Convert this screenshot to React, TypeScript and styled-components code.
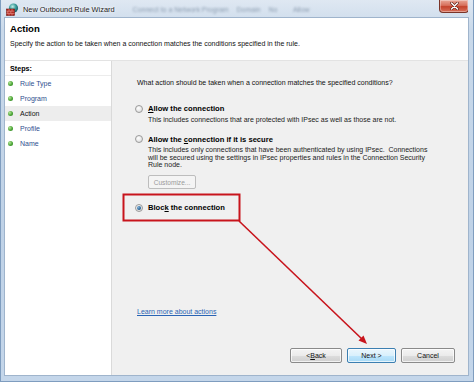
import React from 'react';
import styled, { createGlobalStyle } from 'styled-components';

const Global = createGlobalStyle`
  html, body { margin: 0; padding: 0; }
  body {
    width: 474px; height: 382px; overflow: hidden;
    font-family: "Liberation Sans", Arial, sans-serif;
    background: #bcd0e6;
  }
`;

const Window = styled.div`
  position: relative;
  width: 474px;
  height: 382px;
  box-sizing: border-box;
  display: flex;
  flex-direction: column;
  background: linear-gradient(180deg, #dfe8f2 0%, #c9d9ea 8%, #bfd2e7 60%, #c4d6ea 100%);
  border-left: 1px solid #7f9dbf;
  border-right: 1px solid #7f9dbf;
  border-bottom: 1px solid #7f9dbf;
  padding: 0 5px 6px 4px;
`;

const TitleBar = styled.div`
  position: relative;
  height: 18px;
  flex: 0 0 18px;
  display: flex;
  align-items: center;
  gap: 4px;
  padding-left: 1px;
  overflow: hidden;
`;

const TitleText = styled.span`
  font-family: "Liberation Sans", Arial, sans-serif;
  font-size: 7.4px;
  color: #1a1a1a;
  white-space: nowrap;
  text-shadow: 0 0 4px #fff, 0 0 2px #fff;
  position: relative;
  z-index: 1;
`;

const BlurText = styled.span`
  font-size: 7px;
  color: #50657d;
  opacity: 0.55;
  filter: blur(1.1px);
  white-space: nowrap;
  margin-left: 14px;
`;

const CloseButton = styled.div`
  position: absolute;
  right: -1px;
  top: 0;
  width: 30px;
  height: 13px;
  box-sizing: border-box;
  border: 1px solid #7a3428;
  border-top: none;
  border-radius: 0 0 4px 4px;
  background: linear-gradient(180deg, #e9a797 0%, #d7705c 45%, #c4432c 55%, #d8705a 100%);
  display: flex;
  align-items: center;
  justify-content: center;
  box-shadow: inset 0 0 0 1px rgba(255,255,255,0.35);
`;

const Client = styled.div`
  flex: 1;
  display: flex;
  flex-direction: column;
  background: #f0f0f0;
  box-shadow: 0 0 0 1px #9fb4cc;
`;

const Header = styled.div`
  height: 43px;
  flex: 0 0 43px;
  box-sizing: border-box;
  background: #ffffff;
  border-bottom: 1px solid #e3e3e3;
  padding: 5px 0 0 5px;
`;

const HeaderTitle = styled.div`
  font-size: 9.6px;
  font-weight: bold;
  line-height: 12px;
  color: #000;
`;

const HeaderDesc = styled.div`
  margin-top: 4px;
  font-size: 7px;
  line-height: 9px;
  color: #111;
`;

const Body = styled.div`
  flex: 1;
  display: flex;
`;

const StepsPanel = styled.div`
  width: 107px;
  flex: 0 0 107px;
  box-sizing: border-box;
  background: #ffffff;
  border-right: 1px solid #dadada;
  display: flex;
  flex-direction: column;
`;

const StepsHeader = styled.div`
  height: 15px;
  box-sizing: border-box;
  border-bottom: 1px solid #ececec;
  padding-left: 5px;
  display: flex;
  align-items: center;
  font-size: 7.2px;
  font-weight: bold;
  color: #000;
`;

const StepRow = styled.div<{ $active?: boolean }>`
  height: 15px;
  display: flex;
  align-items: center;
  gap: 7px;
  padding-left: 3px;
  background: ${p => (p.$active ? '#ededed' : 'transparent')};
  font-size: 7px;
  color: ${p => (p.$active ? '#111' : '#2f4f8f')};
`;

const Bullet = styled.span`
  width: 5px;
  height: 5px;
  border-radius: 50%;
  background: radial-gradient(circle at 35% 35%, #b7e59a 0%, #4aa535 55%, #2e7a22 100%);
`;

const Content = styled.div`
  flex: 1;
  display: flex;
  flex-direction: column;
  padding: 17px 13px 12px 25px;
  position: relative;
`;

const Question = styled.div`
  font-size: 7px;
  line-height: 9px;
  color: #111;
`;

const Option = styled.div<{ $top: number }>`
  margin-top: ${p => p.$top}px;
  display: flex;
  align-items: center;
  gap: 5px;
  margin-left: -2px;
`;

const Radio = styled.span<{ $checked?: boolean }>`
  width: 8px;
  height: 8px;
  box-sizing: border-box;
  border-radius: 50%;
  border: 1px solid #9a9a9a;
  background: radial-gradient(circle at 40% 35%, #ffffff 0%, #e6e6e6 60%, #cfcfcf 100%);
  display: flex;
  align-items: center;
  justify-content: center;
  &::after {
    content: '';
    display: ${p => (p.$checked ? 'block' : 'none')};
    width: 4px;
    height: 4px;
    border-radius: 50%;
    background: radial-gradient(circle at 35% 35%, #7fb0d8 0%, #1f5a8c 70%, #173f66 100%);
  }
`;

const OptionLabel = styled.span`
  font-size: 7.6px;
  font-weight: bold;
  line-height: 9px;
  color: #000;
  white-space: nowrap;
`;

const Desc = styled.div<{ $top: number }>`
  margin-top: ${p => p.$top}px;
  margin-left: 11px;
  font-size: 7px;
  line-height: 7.8px;
  color: #222;
  width: 286px;
`;

const CustomizeButton = styled.div`
  margin: 6px 0 0 11px;
  width: 48px;
  height: 14px;
  box-sizing: border-box;
  border: 1px solid #bdbdbd;
  border-radius: 2px;
  background: #f4f4f4;
  font-size: 6.6px;
  color: #9a9a9a;
  display: flex;
  align-items: center;
  justify-content: center;
`;

const Link = styled.a`
  margin-top: auto;
  margin-bottom: 32px;
  font-size: 7px;
  line-height: 9px;
  color: #2a64b4;
  text-decoration: underline;
  cursor: pointer;
`;

const ButtonRow = styled.div`
  display: flex;
  justify-content: flex-end;
  gap: 5px;
`;

const Button = styled.div<{ $w: number; $default?: boolean }>`
  width: ${p => p.$w}px;
  height: 15px;
  box-sizing: border-box;
  border: 1px solid ${p => (p.$default ? '#3c7fb1' : '#8a8a8a')};
  border-radius: 2px;
  background: ${p =>
    p.$default
      ? 'linear-gradient(180deg, #eaf6fd 0%, #d9f0fc 50%, #bee6fd 51%, #a7d9f5 100%)'
      : 'linear-gradient(180deg, #f4f4f4 0%, #ebebeb 50%, #dddddd 51%, #cfcfcf 100%)'};
  box-shadow: inset 0 0 0 1px rgba(255,255,255,0.7);
  font-size: 7px;
  color: #111;
  display: flex;
  align-items: center;
  justify-content: center;
`;

const U = styled.span`
  text-decoration: underline;
`;

const Annotation = styled.svg`
  position: absolute;
  left: 0;
  top: 0;
  width: 474px;
  height: 382px;
  pointer-events: none;
`;

const FirewallIcon = () => (
  <svg width="13" height="13" viewBox="0 0 13 13">
    <defs>
      <radialGradient id="globe" cx="40%" cy="35%" r="65%">
        <stop offset="0%" stopColor="#bfeee8" />
        <stop offset="55%" stopColor="#3a9c9a" />
        <stop offset="100%" stopColor="#1d5f6a" />
      </radialGradient>
    </defs>
    <circle cx="7.5" cy="5" r="4.6" fill="url(#globe)" />
    <rect x="0.5" y="6" width="8" height="6.5" fill="#b3261e" stroke="#6e130e" strokeWidth="0.6" />
    <path d="M0.5 8.2H8.5M0.5 10.4H8.5M3 6V8.2M6 6V8.2M1.8 8.2V10.4M4.8 8.2V10.4M3 10.4V12.5M6 10.4V12.5" stroke="#f1b3a8" strokeWidth="0.5" />
  </svg>
);

export default function App() {
  return (
    <>
      <Global />
      <Window>
        <TitleBar>
          <FirewallIcon />
          <TitleText>New Outbound Rule Wizard</TitleText>
          <BlurText>Connect to a Network Program&nbsp;&nbsp;&nbsp;&nbsp;Domain&nbsp;&nbsp;&nbsp;&nbsp;No&nbsp;&nbsp;&nbsp;&nbsp;&nbsp;&nbsp;&nbsp;&nbsp;Allow</BlurText>
          <CloseButton>
            <svg width="9" height="8" viewBox="0 0 9 8">
              <path d="M1.5 1L7.5 7M7.5 1L1.5 7" stroke="#5a1a10" strokeWidth="2.6" strokeLinecap="round" />
              <path d="M1.5 1L7.5 7M7.5 1L1.5 7" stroke="#ffffff" strokeWidth="1.5" strokeLinecap="round" />
            </svg>
          </CloseButton>
        </TitleBar>
        <Client>
          <Header>
            <HeaderTitle>Action</HeaderTitle>
            <HeaderDesc>Specify the action to be taken when a connection matches the conditions specified in the rule.</HeaderDesc>
          </Header>
          <Body>
            <StepsPanel>
              <StepsHeader>Steps:</StepsHeader>
              {['Rule Type', 'Program', 'Action', 'Profile', 'Name'].map(s => (
                <StepRow key={s} $active={s === 'Action'}>
                  <Bullet />
                  {s}
                </StepRow>
              ))}
            </StepsPanel>
            <Content>
              <Question>What action should be taken when a connection matches the specified conditions?</Question>
              <Option $top={17}>
                <Radio />
                <OptionLabel><U>A</U>llow the connection</OptionLabel>
              </Option>
              <Desc $top={3}>This includes connections that are protected with IPsec as well as those are not.</Desc>
              <Option $top={11}>
                <Radio />
                <OptionLabel>Allow the <U>c</U>onnection if it is secure</OptionLabel>
              </Option>
              <Desc $top={2}>
                This includes only connections that have been authenticated by using IPsec.&nbsp; Connections will be secured using the settings in IPsec properties and rules in the Connection Security Rule node.
              </Desc>
              <CustomizeButton>Customize...</CustomizeButton>
              <Option $top={14}>
                <Radio $checked />
                <OptionLabel>Bloc<U>k</U> the connection</OptionLabel>
              </Option>
              <Link>Learn more about actions</Link>
              <ButtonRow>
                <Button $w={52}>&lt; <U>B</U>ack</Button>
                <Button $w={49} $default>Next &gt;</Button>
                <Button $w={54}>Cancel</Button>
              </ButtonRow>
            </Content>
          </Body>
        </Client>
        <Annotation viewBox="0 0 474 382">
          <rect x="122.5" y="194.5" width="116" height="26" fill="none" stroke="#c8141c" strokeWidth="2" />
          <line x1="238" y1="221" x2="362" y2="340" stroke="#c8141c" strokeWidth="1.6" />
          <path d="M366 344 L357.5 340.5 L362.5 335.5 Z" fill="#c8141c" />
        </Annotation>
      </Window>
    </>
  );
}
